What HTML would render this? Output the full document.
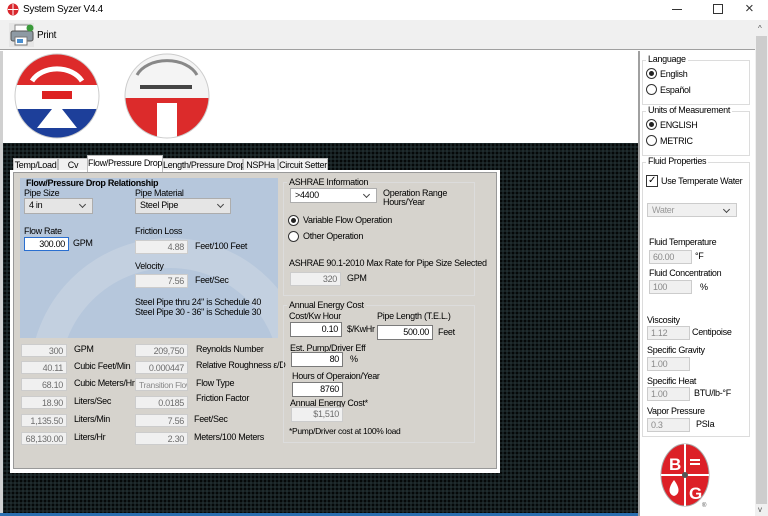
<!DOCTYPE html>
<html><head><meta charset="utf-8"><style>
*{box-sizing:border-box;margin:0;padding:0}
body{width:768px;height:516px;overflow:hidden;position:relative;background:#fff;font-family:"Liberation Sans",sans-serif;font-size:9px;letter-spacing:-0.3px;color:#000}
.a{position:absolute;white-space:nowrap}
.in,.ds,.dl,.cb{white-space:nowrap;overflow:hidden}
.in{position:absolute;background:#fff;border:1px solid #7a7a7a;text-align:right;padding:0 3px;line-height:12px}
.ds{position:absolute;background:#f0f0f0;border:1px solid #ccc;text-align:right;padding:0 3px;color:#6d6d6d;line-height:12px}
.dl{position:absolute;background:#f0f0f0;border:1px solid #ccc;text-align:left;padding:0 3px;color:#8a8a8a;line-height:12px}
.cb{position:absolute;background:#e5e5e5;border:1px solid #adadad;padding:1px 4px}
.cb::after{content:"";position:absolute;right:7px;top:3px;width:4px;height:4px;border-right:1px solid #444;border-bottom:1px solid #444;transform:rotate(45deg)}
.gb{position:absolute;border:1px solid #dcdcdc}
.gl{position:absolute;padding:0 2px}
.rd{position:absolute;width:11px;height:11px;border:1px solid #333;border-radius:50%;background:#fff}
.rd.on::after{content:"";position:absolute;left:2px;top:2px;width:5px;height:5px;border-radius:50%;background:#222}
.tab{position:absolute;top:158px;height:13px;background:#f0f0f0;border:1px solid #bbb;border-bottom:none;line-height:12px;text-align:center;white-space:nowrap}
</style></head><body>
<svg class="a" style="left:7px;top:3px" width="12" height="13" viewBox="0 0 12 13"><ellipse cx="6" cy="6.5" rx="5.5" ry="6" fill="#d8262c"/><path d="M6 1v11M1 6.5h10" stroke="#fff" stroke-width="1"/></svg>
<div class="a" style="left:23px;top:4px;font-size:10px">System Syzer V4.4</div>
<div class="a" style="left:672px;top:9px;width:10px;height:1px;background:#333"></div>
<div class="a" style="left:713px;top:4px;width:10px;height:10px;border:1px solid #333"></div>
<div class="a" style="left:745px;top:0px;font-size:15px;color:#333">×</div>
<div class="a" style="left:0;top:20px;width:755px;height:30px;background:#f0f0f0;border-bottom:1px solid #a0a0a0"></div>
<div class="a" style="left:9px;top:23px;width:25px;height:24px;background:#e6e6e6"></div>
<svg class="a" style="left:10px;top:24px" width="24" height="22"><rect x="5" y="1" width="13" height="6" fill="#fff" stroke="#888"/><rect x="1" y="7" width="22" height="10" rx="2" fill="#8e9aa4" stroke="#555"/><rect x="5" y="13" width="12" height="8" fill="#fff" stroke="#777"/><rect x="7" y="15" width="6" height="4" fill="#4a8fd0"/><circle cx="20" cy="4" r="3.5" fill="#3b9b3b"/></svg>
<div class="a" style="left:37px;top:30px;font-size:10px">Print</div>
<div class="a" style="left:0;top:51px;width:3px;height:465px;background:#d0d0d0"></div>
<div class="a" style="left:3px;top:51px;width:635px;height:92px;background:#fff"></div>
<svg class="a" style="left:12px;top:53px" width="200" height="86">
<defs><clipPath id="c1"><circle cx="45" cy="43" r="42"/></clipPath><clipPath id="c2"><circle cx="155" cy="43" r="42"/></clipPath></defs>
<g clip-path="url(#c1)"><rect x="0" y="0" width="90" height="32" fill="#dd2a2a"/><rect x="0" y="32" width="90" height="24" fill="#fff"/><rect x="0" y="56" width="90" height="40" fill="#1d3f9a"/>
<path d="M20 28a28 22 0 0 1 50 0" stroke="#fff" stroke-width="5" fill="none"/><rect x="30" y="38" width="30" height="8" fill="#d22"/><path d="M25 75 L40 56 L50 56 L65 75Z" fill="#fff"/></g>
<circle cx="45" cy="43" r="42" fill="none" stroke="#ccc"/>
<g clip-path="url(#c2)"><rect x="110" y="0" width="90" height="45" fill="#f4f4f4"/><rect x="110" y="45" width="90" height="45" fill="#dc2b2b"/><rect x="145" y="50" width="20" height="40" fill="#fff"/><rect x="128" y="32" width="52" height="4" fill="#444"/><path d="M125 22a32 22 0 0 1 60 0" stroke="#888" stroke-width="3" fill="none"/></g>
<circle cx="155" cy="43" r="42" fill="none" stroke="#ccc"/>
</svg>
<div class="a" style="left:3px;top:143px;width:635px;height:373px;background-color:#1f2b2d;background-image:radial-gradient(circle,#050808 1.2px,transparent 1.7px);background-size:4px 4px"></div>
<div class="a" style="left:0;top:513px;width:640px;height:3px;background:#2a6fb0"></div>
<div class="tab" style="left:13px;width:45px">Temp/Load</div>
<div class="tab" style="left:58px;width:30px">Cv</div>
<div class="tab" style="left:162px;width:81px">Length/Pressure Drop</div>
<div class="tab" style="left:243px;width:35px">NSPHa</div>
<div class="tab" style="left:278px;width:50px">Circuit Setter</div>
<div class="tab" style="left:87px;top:155px;width:76px;height:17px;background:#fff;z-index:2;line-height:14px">Flow/Pressure Drop</div>
<div class="a" style="left:10px;top:170px;width:490px;height:303px;background:#fff"></div>
<div class="a" style="left:13px;top:172px;width:484px;height:297px;background:#d6d3cd;border:1px solid #999"></div>
<div class="a" style="left:20px;top:178px;width:258px;height:160px;background:#b6c7dc;overflow:hidden">
<svg width="258" height="160" style="position:absolute;left:0;top:0"><circle cx="150" cy="200" r="125" fill="none" stroke="#c3d0e0" stroke-width="30"/></svg>
</div>
<div class="a" style="left:26px;top:178px;font-weight:bold">Flow/Pressure Drop Relationship</div>
<div class="a" style="left:24px;top:188px">Pipe Size</div>
<div class="cb" style="left:24px;top:198px;width:69px;height:16px">4 in</div>
<div class="a" style="left:135px;top:188px">Pipe Material</div>
<div class="cb" style="left:135px;top:198px;width:96px;height:16px">Steel Pipe</div>
<div class="a" style="left:24px;top:226px">Flow Rate</div>
<div class="in" style="left:24px;top:237px;width:45px;height:14px;border:1px solid #2a6fd0">300.00</div>
<div class="a" style="left:73px;top:238px">GPM</div>
<div class="a" style="left:135px;top:226px">Friction Loss</div>
<div class="ds" style="left:135px;top:240px;width:53px;height:14px">4.88</div>
<div class="a" style="left:195px;top:241px">Feet/100 Feet</div>
<div class="a" style="left:135px;top:261px">Velocity</div>
<div class="ds" style="left:135px;top:274px;width:53px;height:14px">7.56</div>
<div class="a" style="left:195px;top:275px">Feet/Sec</div>
<div class="a" style="left:135px;top:297px">Steel Pipe thru 24" is Schedule 40</div>
<div class="a" style="left:135px;top:307px">Steel Pipe 30 - 36" is Schedule 30</div>
<div class="ds" style="left:21px;top:344px;width:46px;height:13px">300</div><div class="a" style="left:74px;top:344px">GPM</div>
<div class="ds" style="left:135px;top:344px;width:53px;height:13px">209,750</div><div class="a" style="left:196px;top:344px">Reynolds Number</div>
<div class="ds" style="left:21px;top:361px;width:46px;height:13px">40.11</div><div class="a" style="left:74px;top:361px">Cubic Feet/Min</div>
<div class="ds" style="left:135px;top:361px;width:53px;height:13px">0.000447</div><div class="a" style="left:196px;top:360px">Relative Roughness ε/D</div>
<div class="ds" style="left:21px;top:378px;width:46px;height:13px">68.10</div><div class="a" style="left:74px;top:378px">Cubic Meters/Hr</div>
<div class="dl" style="left:135px;top:378px;width:53px;height:13px;font-size:8.5px">Transition Flow</div><div class="a" style="left:196px;top:378px">Flow Type</div>
<div class="ds" style="left:21px;top:396px;width:46px;height:13px">18.90</div><div class="a" style="left:74px;top:396px">Liters/Sec</div>
<div class="ds" style="left:135px;top:396px;width:53px;height:13px">0.0185</div><div class="a" style="left:196px;top:393px">Friction Factor</div>
<div class="ds" style="left:21px;top:414px;width:46px;height:13px">1,135.50</div><div class="a" style="left:74px;top:414px">Liters/Min</div>
<div class="ds" style="left:135px;top:414px;width:53px;height:13px">7.56</div><div class="a" style="left:194px;top:414px">Feet/Sec</div>
<div class="ds" style="left:21px;top:432px;width:46px;height:13px">68,130.00</div><div class="a" style="left:74px;top:432px">Liters/Hr</div>
<div class="ds" style="left:135px;top:432px;width:53px;height:13px">2.30</div><div class="a" style="left:194px;top:432px">Meters/100 Meters</div>
<div class="gb" style="left:283px;top:182px;width:192px;height:114px"></div>
<div class="gl" style="left:287px;top:177px;background:#d6d3cd">ASHRAE Information</div>
<div class="cb" style="left:290px;top:188px;width:87px;height:15px;background:#fff;padding-top:1px">&gt;4400</div>
<div class="a" style="left:383px;top:188px">Operation Range</div>
<div class="a" style="left:383px;top:197px">Hours/Year</div>
<div class="rd on" style="left:288px;top:215px"></div><div class="a" style="left:303px;top:215px">Variable Flow Operation</div>
<div class="rd" style="left:288px;top:231px"></div><div class="a" style="left:303px;top:231px">Other Operation</div>
<div class="a" style="left:289px;top:258px">ASHRAE 90.1-2010 Max Rate for Pipe Size Selected</div>
<div class="ds" style="left:290px;top:272px;width:51px;height:14px">320</div><div class="a" style="left:347px;top:273px">GPM</div>
<div class="gb" style="left:283px;top:305px;width:192px;height:138px"></div>
<div class="gl" style="left:287px;top:300px;background:#d6d3cd">Annual Energy Cost</div>
<div class="a" style="left:289px;top:311px">Cost/Kw Hour</div>
<div class="in" style="left:290px;top:322px;width:52px;height:15px">0.10</div><div class="a" style="left:347px;top:324px">$/KwHr</div>
<div class="a" style="left:377px;top:311px">Pipe Length (T.E.L.)</div>
<div class="in" style="left:377px;top:325px;width:56px;height:15px">500.00</div><div class="a" style="left:438px;top:327px">Feet</div>
<div class="a" style="left:290px;top:343px">Est. Pump/Driver Eff</div>
<div class="in" style="left:291px;top:352px;width:52px;height:15px">80</div><div class="a" style="left:350px;top:354px">%</div>
<div class="a" style="left:292px;top:371px">Hours of Operaion/Year</div>
<div class="in" style="left:292px;top:382px;width:51px;height:15px">8760</div>
<div class="a" style="left:290px;top:398px">Annual Energy Cost*</div>
<div class="ds" style="left:291px;top:407px;width:52px;height:15px">$1,510</div>
<div class="a" style="left:289px;top:426px;font-size:8.5px">*Pump/Driver cost at 100% load</div>
<div class="a" style="left:638px;top:51px;width:2px;height:465px;background:#a0a0a0"></div>
<div class="a" style="left:640px;top:51px;width:115px;height:465px;background:#fff"></div>
<div class="gb" style="left:642px;top:60px;width:108px;height:45px"></div>
<div class="gl" style="left:646px;top:54px;background:#fff">Language</div>
<div class="rd on" style="left:646px;top:68px"></div><div class="a" style="left:660px;top:69px">English</div>
<div class="rd" style="left:646px;top:84px"></div><div class="a" style="left:660px;top:85px">Español</div>
<div class="gb" style="left:642px;top:111px;width:108px;height:45px"></div>
<div class="gl" style="left:646px;top:105px;background:#fff">Units of Measurement</div>
<div class="rd on" style="left:646px;top:119px"></div><div class="a" style="left:660px;top:120px">ENGLISH</div>
<div class="rd" style="left:646px;top:135px"></div><div class="a" style="left:660px;top:136px">METRIC</div>
<div class="gb" style="left:642px;top:162px;width:108px;height:275px"></div>
<div class="gl" style="left:646px;top:156px;background:#fff">Fluid Properties</div>
<div class="a" style="left:646px;top:175px;width:12px;height:12px;border:1px solid #333;font-size:10px;line-height:10px;text-align:center">✓</div>
<div class="a" style="left:661px;top:176px">Use Temperate Water</div>
<div class="cb" style="left:647px;top:203px;width:90px;height:14px;background:#f0f0f0;border-color:#ccc;color:#999;padding-top:1px">Water</div>
<div class="a" style="left:649px;top:237px">Fluid Temperature</div>
<div class="dl" style="left:649px;top:250px;width:43px;height:14px">60.00</div><div class="a" style="left:695px;top:251px">°F</div>
<div class="a" style="left:649px;top:268px">Fluid Concentration</div>
<div class="dl" style="left:649px;top:280px;width:43px;height:14px">100</div><div class="a" style="left:700px;top:282px">%</div>
<div class="a" style="left:647px;top:315px">Viscosity</div>
<div class="dl" style="left:647px;top:326px;width:43px;height:14px">1.12</div><div class="a" style="left:692px;top:327px">Centipoise</div>
<div class="a" style="left:647px;top:345px">Specific Gravity</div>
<div class="dl" style="left:647px;top:357px;width:43px;height:14px">1.00</div>
<div class="a" style="left:647px;top:376px">Specific Heat</div>
<div class="dl" style="left:647px;top:387px;width:43px;height:14px">1.00</div><div class="a" style="left:694px;top:388px">BTU/lb-°F</div>
<div class="a" style="left:647px;top:406px">Vapor Pressure</div>
<div class="dl" style="left:647px;top:418px;width:43px;height:14px">0.3</div><div class="a" style="left:696px;top:419px">PSIa</div>
<svg class="a" style="left:660px;top:443px" width="52" height="66" viewBox="0 0 52 66">
<ellipse cx="25" cy="32" rx="24" ry="31" fill="#dc2027" stroke="#aaa"/>
<path d="M25 1v62M1 32h48" stroke="#fff" stroke-width="2"/>
<text x="9" y="27" font-family="Liberation Sans" font-weight="bold" font-size="17" fill="#fff">B</text>
<text x="29" y="56" font-family="Liberation Sans" font-weight="bold" font-size="17" fill="#fff">G</text>
<path d="M30 17h10M30 21h10" stroke="#fff" stroke-width="2"/>
<path d="M14 37c-6 8-6 14 0 16c6-2 6-8 0-16z" fill="#fff"/>
<circle cx="25" cy="32" r="3" fill="#555"/>
<text x="42" y="64" font-size="6" fill="#555" font-family="Liberation Sans">®</text>
</svg>
<div class="a" style="left:755px;top:20px;width:13px;height:496px;background:#f0f0f0"></div>
<div class="a" style="left:756px;top:36px;width:11px;height:468px;background:#cdcdcd"></div>
<div class="a" style="left:758px;top:24px;font-size:8px;color:#555">^</div>
<div class="a" style="left:758px;top:505px;font-size:8px;color:#555">v</div>
</body></html>
